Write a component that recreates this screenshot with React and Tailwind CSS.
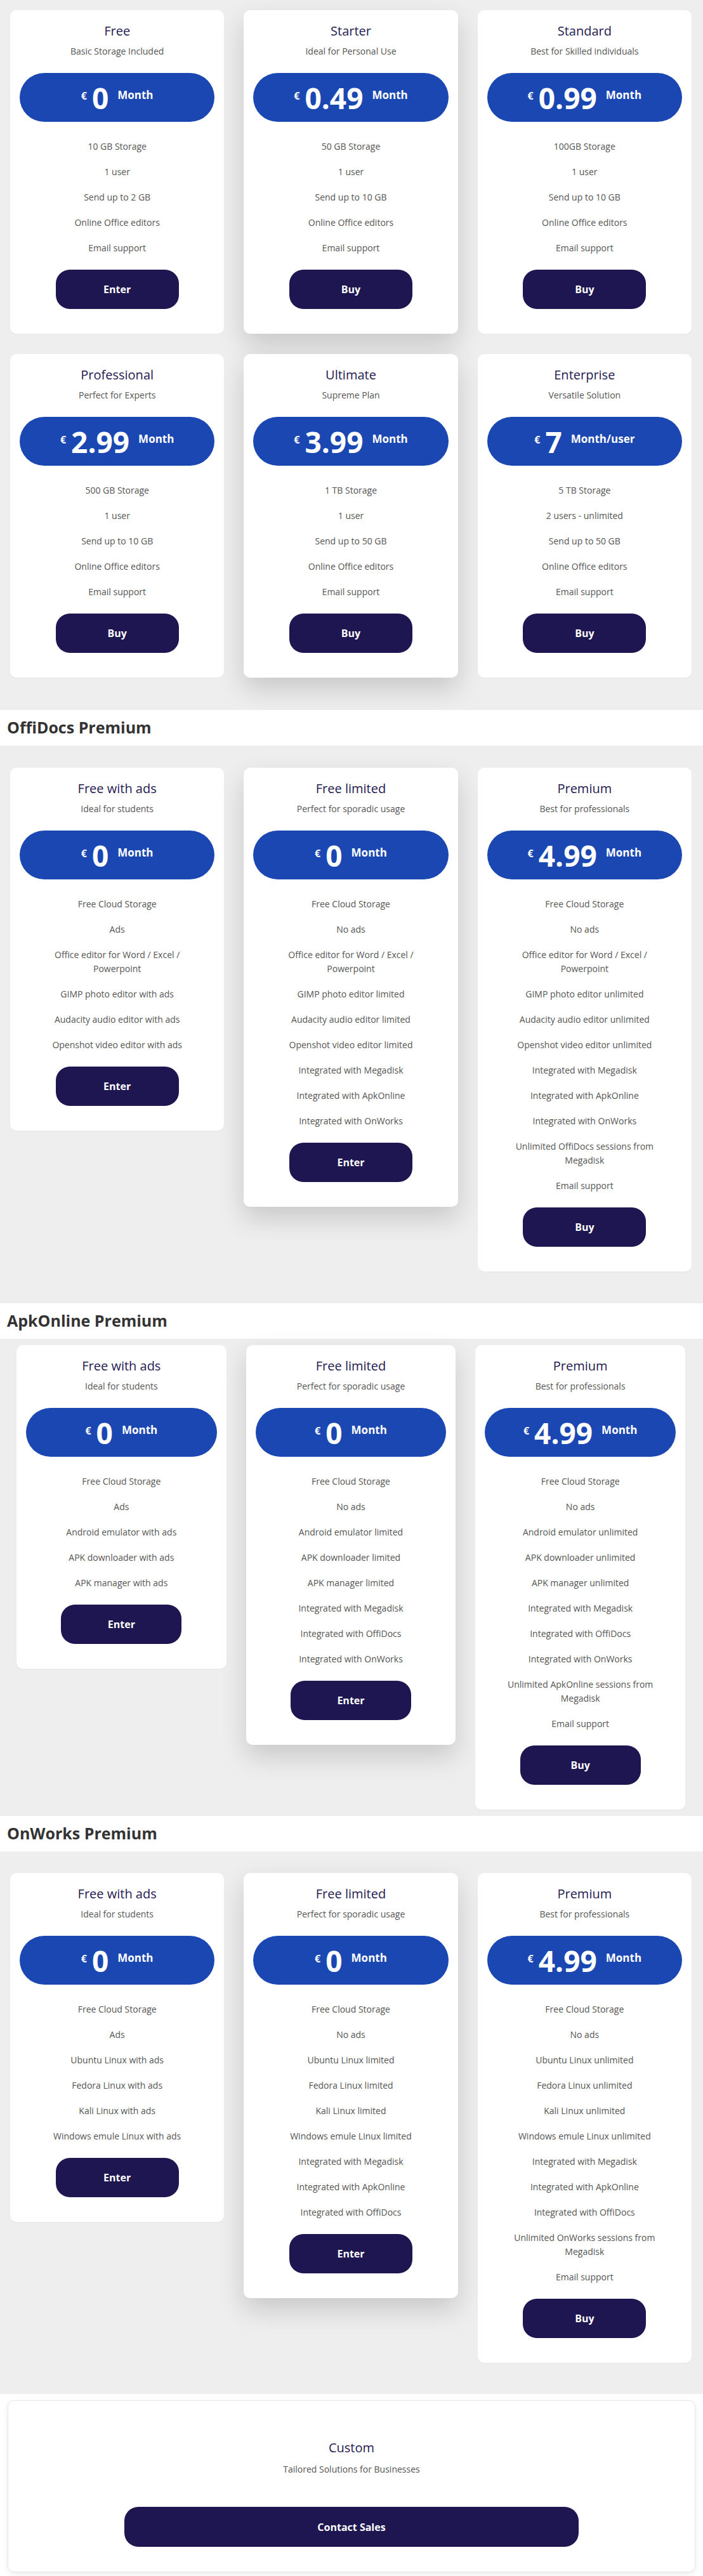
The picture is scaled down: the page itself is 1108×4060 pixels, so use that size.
import React from 'react'

const font = { fontFamily: '"Open Sans", "Noto Sans", Arial, sans-serif' }

const topPlans = [
  {
    name: 'Free',
    sub: 'Basic Storage Included',
    price: '0',
    features: ['10 GB Storage', '1 user', 'Send up to 2 GB', 'Online Office editors', 'Email support'],
    cta: 'Enter',
  },
  {
    name: 'Starter',
    sub: 'Ideal for Personal Use',
    price: '0.49',
    features: ['50 GB Storage', '1 user', 'Send up to 10 GB', 'Online Office editors', 'Email support'],
    cta: 'Buy',
    featured: true,
  },
  {
    name: 'Standard',
    sub: 'Best for Skilled individuals',
    price: '0.99',
    features: ['100GB Storage', '1 user', 'Send up to 10 GB', 'Online Office editors', 'Email support'],
    cta: 'Buy',
  },
  {
    name: 'Professional',
    sub: 'Perfect for Experts',
    price: '2.99',
    features: ['500 GB Storage', '1 user', 'Send up to 10 GB', 'Online Office editors', 'Email support'],
    cta: 'Buy',
  },
  {
    name: 'Ultimate',
    sub: 'Supreme Plan',
    price: '3.99',
    features: ['1 TB Storage', '1 user', 'Send up to 50 GB', 'Online Office editors', 'Email support'],
    cta: 'Buy',
    featured: true,
  },
  {
    name: 'Enterprise',
    sub: 'Versatile Solution',
    price: '7',
    unit: 'Month/user',
    features: ['5 TB Storage', '2 users - unlimited', 'Send up to 50 GB', 'Online Office editors', 'Email support'],
    cta: 'Buy',
  },
]

const offiDocs = [
  {
    name: 'Free with ads',
    sub: 'Ideal for students',
    price: '0',
    features: [
      'Free Cloud Storage',
      'Ads',
      'Office editor for Word / Excel / Powerpoint',
      'GIMP photo editor with ads',
      'Audacity audio editor with ads',
      'Openshot video editor with ads',
    ],
    cta: 'Enter',
  },
  {
    name: 'Free limited',
    sub: 'Perfect for sporadic usage',
    price: '0',
    features: [
      'Free Cloud Storage',
      'No ads',
      'Office editor for Word / Excel / Powerpoint',
      'GIMP photo editor limited',
      'Audacity audio editor limited',
      'Openshot video editor limited',
      'Integrated with Megadisk',
      'Integrated with ApkOnline',
      'Integrated with OnWorks',
    ],
    cta: 'Enter',
    featured: true,
  },
  {
    name: 'Premium',
    sub: 'Best for professionals',
    price: '4.99',
    features: [
      'Free Cloud Storage',
      'No ads',
      'Office editor for Word / Excel / Powerpoint',
      'GIMP photo editor unlimited',
      'Audacity audio editor unlimited',
      'Openshot video editor unlimited',
      'Integrated with Megadisk',
      'Integrated with ApkOnline',
      'Integrated with OnWorks',
      'Unlimited OffiDocs sessions from Megadisk',
      'Email support',
    ],
    cta: 'Buy',
  },
]

const apkOnline = [
  {
    name: 'Free with ads',
    sub: 'Ideal for students',
    price: '0',
    features: ['Free Cloud Storage', 'Ads', 'Android emulator with ads', 'APK downloader with ads', 'APK manager with ads'],
    cta: 'Enter',
  },
  {
    name: 'Free limited',
    sub: 'Perfect for sporadic usage',
    price: '0',
    features: [
      'Free Cloud Storage',
      'No ads',
      'Android emulator limited',
      'APK downloader limited',
      'APK manager limited',
      'Integrated with Megadisk',
      'Integrated with OffiDocs',
      'Integrated with OnWorks',
    ],
    cta: 'Enter',
    featured: true,
  },
  {
    name: 'Premium',
    sub: 'Best for professionals',
    price: '4.99',
    features: [
      'Free Cloud Storage',
      'No ads',
      'Android emulator unlimited',
      'APK downloader unlimited',
      'APK manager unlimited',
      'Integrated with Megadisk',
      'Integrated with OffiDocs',
      'Integrated with OnWorks',
      'Unlimited ApkOnline sessions from Megadisk',
      'Email support',
    ],
    cta: 'Buy',
  },
]

const onWorks = [
  {
    name: 'Free with ads',
    sub: 'Ideal for students',
    price: '0',
    features: [
      'Free Cloud Storage',
      'Ads',
      'Ubuntu Linux with ads',
      'Fedora Linux with ads',
      'Kali Linux with ads',
      'Windows emule Linux with ads',
    ],
    cta: 'Enter',
  },
  {
    name: 'Free limited',
    sub: 'Perfect for sporadic usage',
    price: '0',
    features: [
      'Free Cloud Storage',
      'No ads',
      'Ubuntu Linux limited',
      'Fedora Linux limited',
      'Kali Linux limited',
      'Windows emule Linux limited',
      'Integrated with Megadisk',
      'Integrated with ApkOnline',
      'Integrated with OffiDocs',
    ],
    cta: 'Enter',
    featured: true,
  },
  {
    name: 'Premium',
    sub: 'Best for professionals',
    price: '4.99',
    features: [
      'Free Cloud Storage',
      'No ads',
      'Ubuntu Linux unlimited',
      'Fedora Linux unlimited',
      'Kali Linux unlimited',
      'Windows emule Linux unlimited',
      'Integrated with Megadisk',
      'Integrated with ApkOnline',
      'Integrated with OffiDocs',
      'Unlimited OnWorks sessions from Megadisk',
      'Email support',
    ],
    cta: 'Buy',
  },
]

function PricePill({ price, unit = 'Month' }) {
  return (
    <div className="mx-[15px] flex h-[77px] items-center justify-center rounded-full bg-[#1b47b2] text-white">
      <div className="flex items-start font-bold">
        <span className="mt-[12px] text-[16px] leading-none">€</span>
        <span className="ml-[8px] text-[46px] leading-none">{price}</span>
        <span className="ml-[14px] mt-[10px] text-[17px] leading-none">{unit}</span>
      </div>
    </div>
  )
}

function PlanCard({ plan }) {
  return (
    <div
      className={`flex flex-col rounded-[10px] bg-white pb-[39px] pt-[19px] text-center ${
        plan.featured ? 'shadow-[0_18px_40px_rgba(0,0,0,0.16)]' : 'shadow-[0_1px_3px_rgba(0,0,0,0.03)]'
      }`}
    >
      <h3 className="text-[20px] leading-[28px] text-[#1f1a52]">{plan.name}</h3>
      <p className="mt-[8px] text-[14px] leading-[20px] text-[#555]">{plan.sub}</p>
      <div className="mt-[24px]">
        <PricePill price={plan.price} unit={plan.unit} />
      </div>
      <ul className="mt-[28px] flex flex-col gap-[18px] px-[40px] text-[14px] leading-[22px] text-[#555]">
        {plan.features.map((f) => (
          <li key={f}>{f}</li>
        ))}
      </ul>
      <button className="mx-auto mt-[23px] h-[62px] w-[57.5%] rounded-[22px] bg-[#1e1650] text-[16px] font-bold text-white">
        {plan.cta}
      </button>
    </div>
  )
}

function SectionHeading({ children }) {
  return (
    <div className="flex h-[56px] items-center bg-white px-[11px]">
      <h2 className="text-[25px] font-bold text-[#333]">{children}</h2>
    </div>
  )
}

export default function App() {
  return (
    <div className="w-[1108px] bg-white" style={font}>
      <section className="bg-[#eeeeee] pb-[51px] pl-[16px] pr-[18px] pt-[16px]">
        <div className="grid grid-cols-3 items-start gap-x-[31px] gap-y-[32px]">
          {topPlans.map((p) => (
            <PlanCard key={p.name} plan={p} />
          ))}
        </div>
      </section>

      <SectionHeading>OffiDocs Premium</SectionHeading>
      <section className="bg-[#eeeeee] pb-[50px] pl-[16px] pr-[18px] pt-[35px]">
        <div className="grid grid-cols-3 items-start gap-x-[31px]">
          {offiDocs.map((p) => (
            <PlanCard key={p.name} plan={p} />
          ))}
        </div>
      </section>

      <SectionHeading>ApkOnline Premium</SectionHeading>
      <section className="bg-[#eeeeee] pb-[10px] pl-[26px] pr-[28px] pt-[10px]">
        <div className="grid grid-cols-3 items-start gap-x-[31px]">
          {apkOnline.map((p) => (
            <PlanCard key={p.name} plan={p} />
          ))}
        </div>
      </section>

      <SectionHeading>OnWorks Premium</SectionHeading>
      <section className="bg-[#eeeeee] pb-[49px] pl-[16px] pr-[18px] pt-[34px]">
        <div className="grid grid-cols-3 items-start gap-x-[31px]">
          {onWorks.map((p) => (
            <PlanCard key={p.name} plan={p} />
          ))}
        </div>
      </section>

      <section className="bg-white px-[12px] pb-[7px] pt-[10px]">
        <div className="flex flex-col items-center rounded-[10px] border border-[#e6e6e6] bg-white pb-[39px] pt-[60px] text-center shadow-[0_3px_10px_rgba(0,0,0,0.08)]">
          <h3 className="text-[20px] leading-[28px] text-[#1f1a52]">Custom</h3>
          <p className="mt-[10px] text-[14px] leading-[20px] text-[#555]">Tailored Solutions for Businesses</p>
          <button className="mt-[49px] h-[63px] w-[716px] rounded-[22px] bg-[#1e1650] text-[16px] font-bold text-white">
            Contact Sales
          </button>
        </div>
      </section>
    </div>
  )
}
